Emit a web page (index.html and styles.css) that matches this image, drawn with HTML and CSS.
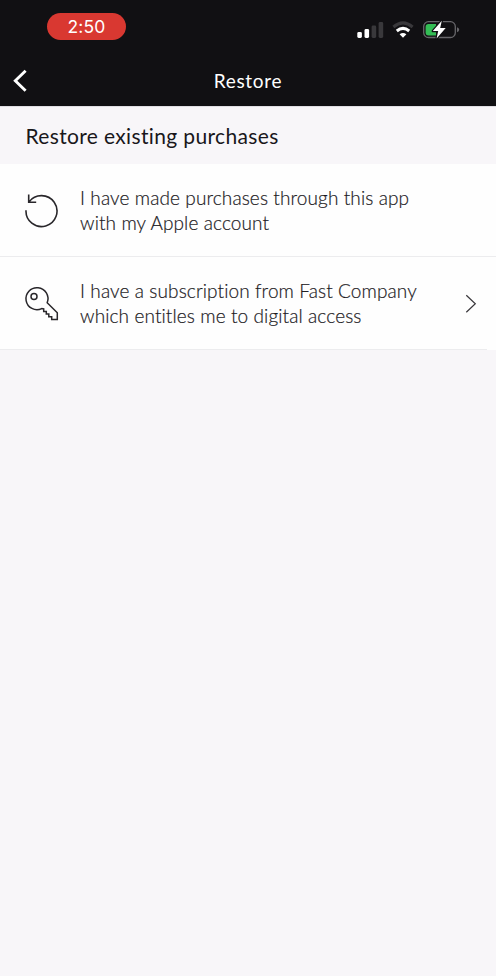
FILE: index.html
```
<!DOCTYPE html>
<html lang="en">
<head>
<meta charset="utf-8">
<title>Restore</title>
<link rel="stylesheet" href="styles.css">
</head>
<body>
<header class="top">
  <div class="status">
    <span class="time">2:50</span>
    <svg class="indicators" width="106" height="24" viewBox="355 18 106 24">
      <g fill="#fff"><rect x="357.3" y="32" width="4.6" height="6" rx="1.4"/><rect x="364.5" y="29" width="4.6" height="9" rx="1.4"/></g>
      <g fill="#39383b"><rect x="371.6" y="25.5" width="4.6" height="12.5" rx="1.4"/><rect x="378.6" y="22" width="4.6" height="16" rx="1.4"/></g>
      <path d="M393.4 27Q403 18.8 412.6 27" fill="none" stroke="#39383b" stroke-width="3"/>
      <path d="M396.8 31Q403 25.8 409.2 31" fill="none" stroke="#fff" stroke-width="3"/>
      <path d="M399.6 34.3Q403 31.5 406.4 34.3L403 37.8Z" fill="#fff"/>
      <rect x="423.7" y="21.7" width="31.6" height="15.8" rx="4.8" fill="none" stroke="#67666a" stroke-width="1.3"/>
      <path d="M428.5 24H436V35.4H428.5Q425.6 35.4 425.6 32.5V26.9Q425.6 24 428.5 24Z" fill="#34bd55"/>
      <path d="M457 27.2Q459.2 28 459.2 29.7T457 32.2Z" fill="#67666a"/>
      <path d="M441.8 20.8L432.8 31H438.2L436.6 38.4L445.7 28.1H440.2Z" fill="#fff" stroke="#111013" stroke-width="2.4" paint-order="stroke" stroke-linejoin="round"/>
    </svg>
  </div>
  <nav class="nav">
    <svg class="back" width="16" height="24" viewBox="12 68 16 24"><path d="M25.6 69.8L15.3 79.8L25.6 89.8" fill="none" stroke="#fff" stroke-width="2.9"/></svg>
    <h1 class="title">Restore</h1>
  </nav>
</header>
<main>
  <h2 class="section">Restore existing purchases</h2>
  <ul class="options">
    <li class="option">
      <svg class="icon" width="36" height="36" viewBox="24 193 36 36" fill="none" stroke="#29272b" stroke-width="1.6"><path d="M26 210.3A15.5 15.5 0 1 0 29 201.9M28.7 194.6V202.2H36.2"/></svg>
      <p class="label"><span class="line">I have made purchases through this app</span><span class="line">with my Apple account</span></p>
    </li>
    <li class="option">
      <svg class="icon" width="36" height="36" viewBox="24 286 36 36" fill="none" stroke="#29272b" stroke-width="1.5"><path d="M47.2 302.7L57.3 312.7V319.4H51.7V316.7H48.8V314.1H46.3V311.6H43.7V308.9L41.7 308.6A11 11 0 1 1 47.2 302.7Z"/><circle cx="34" cy="296.5" r="3"/></svg>
      <p class="label"><span class="line">I have a subscription from Fast Company</span><span class="line">which entitles me to digital access</span></p>
      <svg class="chevron" width="12" height="20" viewBox="465 294 12 20"><path d="M466.3 295.3L475.3 303.8L466.3 312.2" fill="none" stroke="#39373b" stroke-width="1.2"/></svg>
    </li>
  </ul>
</main>
</body>
</html>
```
FILE: styles.css
```
* { box-sizing: border-box; }
body { margin: 0; min-height: 976px; background: #f8f6f9; color: #19171b; font-family: Lato, sans-serif; }
h1, h2, p, ul { margin: 0; padding: 0; font-weight: 400; }
svg { display: block; flex: none; }
.top { height: 106px; background: #111013; color: #fff; }
.status { height: 56px; display: flex; justify-content: space-between; align-items: flex-start; padding: 13px 35px 0 47px; }
.time { width: 79px; height: 27px; border-radius: 14px; background: #d93831; font: 17.5px/27px Inter, sans-serif; letter-spacing: .2px; text-align: center; }
.indicators { margin-top: 5px; }
.nav { height: 50px; display: grid; grid-template-columns: 28px 1fr 28px; align-items: center; }
.back { margin-left: 12px; }
.title { text-align: center; font-size: 19px; line-height: 28px; letter-spacing: .7px; }
.section { height: 58px; padding: 1px 25.5px 0; border-top: 1px solid #e0dee3; font-size: 21px; line-height: 56px; letter-spacing: .35px; }
.options { list-style: none; background: #fefefe; }
.option { height: 93px; display: flex; align-items: flex-start; padding: 21px 19px 0 24px; border-bottom: 1px solid #ececee; }
.option:last-child { border-image: linear-gradient(to right, #ececee 486px, #fefefe 486px) 1; }
.icon { margin-top: 8px; }
.chevron { margin-top: 16px; }
.label { flex: 1; margin-left: 20px; font-size: 19px; font-weight: 300; line-height: 25px; letter-spacing: .11px; white-space: nowrap; -webkit-text-stroke: .2px #29272b; }
.line { display: block; }
```
